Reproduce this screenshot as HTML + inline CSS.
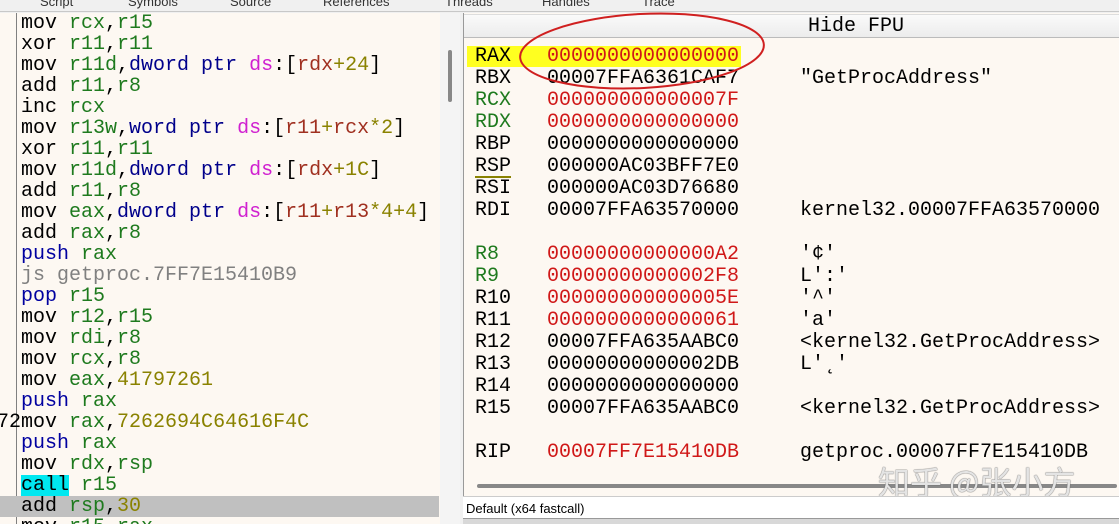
<!DOCTYPE html>
<html><head><meta charset="utf-8"><style>
*{margin:0;padding:0;box-sizing:border-box}
html,body{width:1119px;height:524px;overflow:hidden}
body{background:#f0f0f0;position:relative;font-family:"Liberation Mono",monospace;font-size:20px}
.a{position:absolute;white-space:pre;line-height:21px;height:21px}
.k{color:#000}.g{color:#1e7a1e}.n{color:#00008b}.m{color:#d020d0}.o{color:#8a8200}.r{color:#d01818}.gr{color:#808080}.b{color:#0000a0}.p{color:#a03020}
</style></head><body>
<div style="position:absolute;left:0;top:0;width:1119px;height:12px;background:#f0f0f0;border-bottom:1px solid #c8c8c8;font:13px 'Liberation Sans',sans-serif;color:#333;overflow:hidden">
<span style="position:absolute;left:40px;top:-6px">Script</span><span style="position:absolute;left:128px;top:-6px">Symbols</span><span style="position:absolute;left:230px;top:-6px">Source</span><span style="position:absolute;left:323px;top:-6px">References</span><span style="position:absolute;left:445px;top:-6px">Threads</span><span style="position:absolute;left:542px;top:-6px">Handles</span><span style="position:absolute;left:642px;top:-6px">Trace</span>
</div>
<div style="position:absolute;left:0;top:13px;width:440px;height:511px;background:#fdf8f2"></div>
<div style="position:absolute;left:16px;top:13px;width:1px;height:511px;background:#808080"></div>
<div style="position:absolute;left:440px;top:13px;width:20px;height:511px;background:#f4f4f4"></div>
<div style="position:absolute;left:448px;top:50px;width:4px;height:52px;background:#888;border-radius:2px"></div>
<div style="position:absolute;left:0;top:496px;width:439px;height:21px;background:#c0c0c0"></div>
<div style="position:absolute;left:21px;top:475px;width:48px;height:21px;background:#00e8f0"></div>
<div class="a k" style="left:-3px;top:412px">72</div>
<div style="position:absolute;left:21px;top:13px">
<div class="a" style="top:0"><span class="k">mov </span><span class="g">rcx</span>,<span class="g">r15</span></div>
<div class="a" style="top:21px"><span class="k">xor </span><span class="g">r11</span>,<span class="g">r11</span></div>
<div class="a" style="top:42px"><span class="k">mov </span><span class="g">r11d</span>,<span class="n">dword ptr </span><span class="m">ds</span>:[<span class="p">rdx</span><span class="o">+24</span>]</div>
<div class="a" style="top:63px"><span class="k">add </span><span class="g">r11</span>,<span class="g">r8</span></div>
<div class="a" style="top:84px"><span class="k">inc </span><span class="g">rcx</span></div>
<div class="a" style="top:105px"><span class="k">mov </span><span class="g">r13w</span>,<span class="n">word ptr </span><span class="m">ds</span>:[<span class="p">r11</span><span class="o">+</span><span class="p">rcx</span><span class="o">*2</span>]</div>
<div class="a" style="top:126px"><span class="k">xor </span><span class="g">r11</span>,<span class="g">r11</span></div>
<div class="a" style="top:147px"><span class="k">mov </span><span class="g">r11d</span>,<span class="n">dword ptr </span><span class="m">ds</span>:[<span class="p">rdx</span><span class="o">+1C</span>]</div>
<div class="a" style="top:168px"><span class="k">add </span><span class="g">r11</span>,<span class="g">r8</span></div>
<div class="a" style="top:189px"><span class="k">mov </span><span class="g">eax</span>,<span class="n">dword ptr </span><span class="m">ds</span>:[<span class="p">r11</span><span class="o">+</span><span class="p">r13</span><span class="o">*4+4</span>]</div>
<div class="a" style="top:210px"><span class="k">add </span><span class="g">rax</span>,<span class="g">r8</span></div>
<div class="a" style="top:231px"><span class="b">push </span><span class="g">rax</span></div>
<div class="a gr" style="top:252px">js getproc.7FF7E15410B9</div>
<div class="a" style="top:273px"><span class="b">pop </span><span class="g">r15</span></div>
<div class="a" style="top:294px"><span class="k">mov </span><span class="g">r12</span>,<span class="g">r15</span></div>
<div class="a" style="top:315px"><span class="k">mov </span><span class="g">rdi</span>,<span class="g">r8</span></div>
<div class="a" style="top:336px"><span class="k">mov </span><span class="g">rcx</span>,<span class="g">r8</span></div>
<div class="a" style="top:357px"><span class="k">mov </span><span class="g">eax</span>,<span class="o">41797261</span></div>
<div class="a" style="top:378px"><span class="b">push </span><span class="g">rax</span></div>
<div class="a" style="top:399px"><span class="k">mov </span><span class="g">rax</span>,<span class="o">7262694C64616F4C</span></div>
<div class="a" style="top:420px"><span class="b">push </span><span class="g">rax</span></div>
<div class="a" style="top:441px"><span class="k">mov </span><span class="g">rdx</span>,<span class="g">rsp</span></div>
<div class="a" style="top:462px"><span class="k">call </span><span class="g">r15</span></div>
<div class="a" style="top:483px"><span class="k">add </span><span class="g">rsp</span>,<span class="o">30</span></div>
<div class="a" style="top:504px"><span class="k">mov </span><span class="g">r15</span>,<span class="g">rax</span></div>
</div>
<div style="position:absolute;left:463px;top:13px;width:656px;height:483px;background:#fdf8f2;border-left:1px solid #999"></div>
<div style="position:absolute;left:464px;top:14px;width:655px;height:24px;background:linear-gradient(#fafafa,#ececec);border-bottom:1px solid #bbb;border-top:1px solid #ddd"></div>
<div class="a k" style="left:808px;top:16px">Hide FPU</div>
<div style="position:absolute;left:467px;top:46px;width:274px;height:21px;background:#ffff20"></div>
<div style="position:absolute;left:475px;top:46px">
<div class="a" style="top:0px"><span class="k">RAX</span></div><div class="a r" style="left:72px;top:0px">0000000000000000</div>
<div class="a k" style="top:22px">RBX</div><div class="a k" style="left:72px;top:22px">00007FFA6361CAF7</div><div class="a k" style="left:325px;top:22px">"GetProcAddress"</div>
<div class="a g" style="top:44px">RCX</div><div class="a r" style="left:72px;top:44px">000000000000007F</div>
<div class="a g" style="top:66px">RDX</div><div class="a r" style="left:72px;top:66px">0000000000000000</div>
<div class="a k" style="top:88px">RBP</div><div class="a k" style="left:72px;top:88px">0000000000000000</div>
<div class="a k" style="top:110px">RSP</div><div class="a k" style="left:72px;top:110px">000000AC03BFF7E0</div>
<div style="position:absolute;left:0;top:130px;width:36px;height:2px;background:#8a8200"></div>
<div class="a k" style="top:132px">RSI</div><div class="a k" style="left:72px;top:132px">000000AC03D76680</div>
<div class="a k" style="top:154px">RDI</div><div class="a k" style="left:72px;top:154px">00007FFA63570000</div><div class="a k" style="left:325px;top:154px">kernel32.00007FFA63570000</div>
<div class="a g" style="top:198px">R8</div><div class="a r" style="left:72px;top:198px">00000000000000A2</div><div class="a k" style="left:325px;top:198px">'¢'</div>
<div class="a g" style="top:220px">R9</div><div class="a r" style="left:72px;top:220px">00000000000002F8</div><div class="a k" style="left:325px;top:220px">L':'</div>
<div class="a k" style="top:242px">R10</div><div class="a r" style="left:72px;top:242px">000000000000005E</div><div class="a k" style="left:325px;top:242px">'^'</div>
<div class="a k" style="top:264px">R11</div><div class="a r" style="left:72px;top:264px">0000000000000061</div><div class="a k" style="left:325px;top:264px">'a'</div>
<div class="a k" style="top:286px">R12</div><div class="a k" style="left:72px;top:286px">00007FFA635AABC0</div><div class="a k" style="left:325px;top:286px">&lt;kernel32.GetProcAddress&gt;</div>
<div class="a k" style="top:308px">R13</div><div class="a k" style="left:72px;top:308px">00000000000002DB</div><div class="a k" style="left:325px;top:308px">L'˛'</div>
<div class="a k" style="top:330px">R14</div><div class="a k" style="left:72px;top:330px">0000000000000000</div>
<div class="a k" style="top:352px">R15</div><div class="a k" style="left:72px;top:352px">00007FFA635AABC0</div><div class="a k" style="left:325px;top:352px">&lt;kernel32.GetProcAddress&gt;</div>
<div class="a k" style="top:396px">RIP</div><div class="a r" style="left:72px;top:396px">00007FF7E15410DB</div><div class="a k" style="left:325px;top:396px">getproc.00007FF7E15410DB</div>
</div>
<svg style="position:absolute;left:0;top:0" width="1119" height="524"><ellipse cx="642" cy="51" rx="122" ry="37" fill="none" stroke="#d02020" stroke-width="2" transform="rotate(-3 642 51)"/></svg>
<div style="position:absolute;left:477px;top:484px;width:640px;height:4px;background:#888;border-radius:2px"></div>
<div style="position:absolute;left:878px;top:458px;font:32px 'Noto Sans CJK SC',sans-serif;color:rgba(250,250,250,0.85);text-shadow:0 0 1px #666,0 0 1px #666;white-space:nowrap">知乎 @张小方</div>
<div style="position:absolute;left:463px;top:496px;width:656px;height:22px;background:#fff;border-top:1px solid #ccc;font:13px 'Liberation Sans',sans-serif;padding:4px 3px;color:#000">Default (x64 fastcall)</div>
<div style="position:absolute;left:463px;top:518px;width:656px;height:6px;background:#d8d8d8;border-top:1px solid #999"></div>
</body></html>
